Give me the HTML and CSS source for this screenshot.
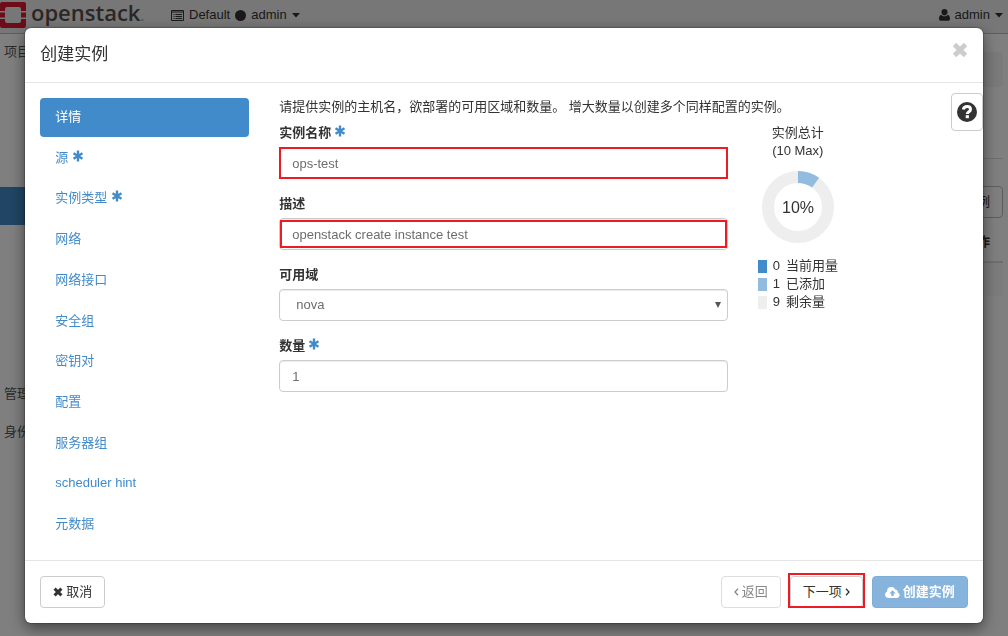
FILE: index.html
```html
<!DOCTYPE html>
<html lang="zh-CN">

<head>
    <meta charset="UTF-8">
    <meta name="viewport" content="width=device-width, initial-scale=1.0">

    <title>创建实例</title>

    <link rel="stylesheet" href="styles.css">
</head>

<body>
    <!-- Shared icons -->
    <svg class="sprite" aria-hidden="true">
        <symbol id="star" viewBox="0 0 12 12">
            <path d="M6 .5v11M1.500 3.300l9 5.400M1.500 8.700l9-5.400" stroke="currentColor" stroke-width="2.400" />
        </symbol>
        <symbol id="times" viewBox="0 0 14 14">
            <path d="M2.200 2.200l9.600 9.600M11.800 2.200l-9.600 9.600" stroke="currentColor" stroke-width="4.200" />
        </symbol>
        <symbol id="caret" viewBox="0 0 8 5">
            <path d="M0 0h8L4 4.500z" fill="currentColor" />
        </symbol>
    </svg>

    <!-- Dashboard behind the dialog -->
    <header class="navbar">
        <a href="#" class="brand">
            <svg class="brand-mark" viewBox="0 0 26 26">
                <path fill="#da1a32" d="M2 0h22a2 2 0 0 1 2 2v7h-5V7a2 2 0 0 0-2-2H7a2 2 0 0 0-2 2v2H0V2a2 2 0 0 1 2-2zM0 10.500h5v5H0zM21 10.500h5v5h-5zM0 17h5v2a2 2 0 0 0 2 2h12a2 2 0 0 0 2-2v-2h5v7a2 2 0 0 1-2 2H2a2 2 0 0 1-2-2z" />
            </svg>
            <span class="brand-name">openstack<small>.</small></span>
        </a>
        <a href="#" class="nav-item">
            <svg width="13" height="11" viewBox="0 0 13 11">
                <path d="M.5.500h12v10H.500zM.500 2h12M2.500 4.500h1M4.500 4.500h6.500M2.500 6.500h1M4.500 6.500h6.500M2.500 8.500h1M4.500 8.500h6.500" fill="none" stroke="currentColor" />
            </svg>
            <span>Default</span>
            <i class="dot"></i>
            <span>admin</span>
            <svg class="caret"><use href="#caret" /></svg>
        </a>
        <a href="#" class="nav-item nav-user">
            <svg width="11" height="12" viewBox="0 0 11 12">
                <path d="M5.500 0a3 3 0 0 1 3 3.200c0 1.900-1.300 3.300-3 3.300s-3-1.400-3-3.300a3 3 0 0 1 3-3.200zM2.300 5.700c1.800 2 4.600 2 6.400 0C10.400 6 11 7.800 11 9.700c0 1.400-.8 2.100-2 2.100H2c-1.200 0-2-.7-2-2.100 0-1.900.600-3.700 2.300-4z" fill="currentColor" />
            </svg>
            <span>admin</span>
            <svg class="caret"><use href="#caret" /></svg>
        </a>
    </header>

    <div class="page">
        <nav class="sidebar">
            <a href="#">项目</a>
            <a href="#" class="current" aria-label="实例"></a>
            <a href="#">管理</a>
            <a href="#">身份管理</a>
        </nav>
        <main class="content">
            <div class="crumbs"></div>
            <hr>
            <div class="toolbar"><button type="button">创建实例</button></div>
            <div class="table-head">动作</div>
            <div class="table-row"></div>
        </main>
    </div>

    <!-- Launch instance dialog -->
    <div class="backdrop">
        <div class="modal" role="dialog" aria-labelledby="modalTitle">
            <div class="modal-header">
                <h1 id="modalTitle">创建实例</h1>
                <button type="button" class="close" aria-label="关闭"><svg><use href="#times" /></svg></button>
            </div>

            <div class="modal-body">
                <nav class="steps">
                    <a href="#" class="active">详情</a>
                    <a href="#">源 <svg class="star"><use href="#star" /></svg></a>
                    <a href="#">实例类型 <svg class="star"><use href="#star" /></svg></a>
                    <a href="#">网络</a>
                    <a href="#">网络接口</a>
                    <a href="#">安全组</a>
                    <a href="#">密钥对</a>
                    <a href="#">配置</a>
                    <a href="#">服务器组</a>
                    <a href="#">scheduler hint</a>
                    <a href="#">元数据</a>
                </nav>

                <div class="step-content">
                    <p>请提供实例的主机名，欲部署的可用区域和数量。 增大数量以创建多个同样配置的实例。</p>

                    <div class="columns">
                        <form class="form">
                            <div class="form-group">
                                <label for="name">实例名称 <svg class="star"><use href="#star" /></svg></label>
                                <div class="field marked"><input type="text" id="name" value="ops-test"></div>
                            </div>
                            <div class="form-group">
                                <label for="description">描述</label>
                                <div class="field marked marked-inner"><input type="text" id="description" value="openstack create instance test"></div>
                            </div>
                            <div class="form-group">
                                <label for="zone">可用域</label>
                                <div class="field">
                                    <select id="zone">
                                        <option>nova</option>
                                    </select>
                                    <svg class="arrow" viewBox="0 0 6 6"><path d="M0 0h6L3 6z" fill="currentColor" /></svg>
                                </div>
                            </div>
                            <div class="form-group">
                                <label for="count">数量 <svg class="star"><use href="#star" /></svg></label>
                                <div class="field"><input type="text" id="count" value="1"></div>
                            </div>
                        </form>

                        <div class="quota">
                            <div>实例总计</div>
                            <div>(10 Max)</div>
                            <svg class="donut" viewBox="0 0 72 72">
                                <circle cx="36" cy="36" r="30" fill="none" stroke="#eee" stroke-width="12" />
                                <circle cx="36" cy="36" r="30" fill="none" stroke="#92bbe0" stroke-width="12" pathLength="100" stroke-dasharray="10 90" transform="rotate(-90 36 36)" />
                                <text x="36" y="42" text-anchor="middle">10%</text>
                            </svg>
                            <ul class="legend">
                                <li><i class="used"></i><b>0</b>当前用量</li>
                                <li><i class="added"></i><b>1</b>已添加</li>
                                <li><i class="left"></i><b>9</b>剩余量</li>
                            </ul>
                        </div>
                    </div>
                </div>

                <button type="button" class="help" aria-label="帮助">
                    <svg width="20" height="20" viewBox="0 0 20 20">
                        <circle cx="10" cy="10" r="10" fill="#333" />
                        <path d="M6.300 7.500C6.800 5.300 8.200 4.500 10.100 4.500c2 0 3.400 1.200 3.400 2.900 0 2.400-3.200 2.300-3.200 4.600" fill="none" stroke="#fff" stroke-width="3" />
                        <path d="M8.700 13.200h3.200v3H8.700z" fill="#fff" />
                    </svg>
                </button>
            </div>

            <div class="modal-footer">
                <button type="button" class="btn cancel"><svg width="10" height="10"><use href="#times" /></svg>取消</button>
                <button type="button" class="btn back" disabled>
                    <svg width="5" height="8" viewBox="0 0 5 8"><path d="M4 .8L1 4l3 3.200" fill="none" stroke="currentColor" stroke-width="1.300" /></svg>返回
                </button>
                <span class="marked marked-next">
                    <button type="button" class="btn next">下一项<svg width="5" height="8" viewBox="0 0 5 8"><path d="M1 .8L4 4 1 7.200" fill="none" stroke="currentColor" stroke-width="1.300" /></svg></button>
                </span>
                <button type="button" class="btn create" disabled>
                    <svg width="15" height="11" viewBox="0 0 15 11">
                        <path fill-rule="evenodd" d="M3.500 11A3.400 3.400 0 0 1 2.100 4.500 4.200 4.200 0 0 1 10.200 2.600a2.500 2.500 0 0 1 2.600 3A2.800 2.800 0 0 1 12 11zM7.500 3.300L4.300 6.500h2V9h2.400V6.500h2z" fill="currentColor" />
                    </svg>创建实例
                </button>
            </div>
        </div>
    </div>
</body>

</html>
```

FILE: styles.css
```css
/* General styles */
* {
    box-sizing: border-box;
}

body {
    margin: 0;
    height: 100vh;
    overflow: hidden;
    background: #fff;
    color: #333;
    font-family: "Liberation Sans", "Noto Sans CJK SC", sans-serif;
    font-size: 13px;
    line-height: 18px;
}

a {
    color: #428bca;
    text-decoration: none;
}

button,
input,
select {
    font: inherit;
    color: inherit;
}

.sprite {
    display: none;
}

/* Top bar */
.navbar {
    display: flex;
    align-items: center;
    height: 34px;
    padding-right: 5px;
    padding-bottom: 3px;
    background: #efefef;
    border-bottom: 1px solid #bbb;
}

.brand {
    display: flex;
    align-items: center;
    gap: 5px;
    width: 171px;
    color: #574e4a;
}

.brand-mark {
    width: 26px;
    height: 26px;
}

.brand-name {
    font-family: "Open Sans", sans-serif;
    font-size: 22px;
    font-weight: 600;
    line-height: 30px;
    padding-bottom: 2px;
}

.brand-name small {
    font-size: 13px;
    color: #999;
}

.nav-item {
    display: flex;
    align-items: center;
    gap: 5px;
    color: #333;
}

.nav-user {
    margin-left: auto;
}

.dot {
    width: 11px;
    height: 11px;
    border-radius: 50%;
    background: #333;
}

.caret {
    width: 8px;
    height: 5px;
}

/* Dashboard */
.page {
    display: flex;
}

.sidebar {
    width: 220px;
    display: flex;
    flex-direction: column;
}

.sidebar a {
    padding: 9px 4px;
    height: 38px;
    color: #555;
}

.sidebar .current {
    margin: 115px 0 151px;
    background: #428bca;
}

.content {
    flex: 1;
    padding: 18px 5px 0 20px;
}

.crumbs {
    height: 35px;
    background: #f5f5f5;
    border-radius: 4px;
}

.content hr {
    margin: 71px 0 27px;
    border: 0;
    border-top: 1px solid #ddd;
}

.toolbar {
    display: flex;
    justify-content: flex-end;
}

.toolbar button {
    height: 32px;
    padding: 0 12px;
    background: #fff;
    border: 1px solid #bbb;
    border-radius: 4px;
}

.table-head {
    height: 45px;
    padding: 15px 13px;
    border-bottom: 2px solid #ddd;
    font-weight: bold;
    text-align: right;
}

.table-row {
    height: 33px;
    background: #f9f9f9;
}

/* Modal */
.backdrop {
    position: fixed;
    inset: 0;
    padding-top: 28px;
    background: rgba(0, 0, 0, 0.5);
}

.modal {
    width: 95%;
    margin: 0 auto;
    background: #fff;
    border-radius: 6px;
    box-shadow: 0 5px 15px rgba(0, 0, 0, 0.5), 0 0 1px 1px rgba(0, 0, 0, 0.2);
}

.modal-header {
    display: flex;
    justify-content: space-between;
    align-items: flex-start;
    padding: 14px 15px;
    border-bottom: 1px solid #e5e5e5;
}

.modal-header h1 {
    margin: 0;
    font-size: 17px;
    font-weight: normal;
    line-height: 26px;
}

.close {
    padding: 0;
    border: 0;
    background: none;
    color: #ccc;
}

.close svg {
    display: block;
    width: 16px;
    height: 16px;
}

.modal-body {
    display: flex;
    gap: 30px;
    position: relative;
    padding: 15px 15px 16px;
}

/* Wizard steps */
.steps {
    display: flex;
    flex-direction: column;
    gap: 2px;
    flex: 0 0 209px;
    height: 446px;
}

.steps a {
    flex: 1;
    display: flex;
    align-items: center;
    gap: 4px;
    padding: 0 15px 1px;
    border-radius: 4px;
}

.steps .active {
    background: #428bca;
    color: #fff;
}

.star {
    width: 12px;
    height: 12px;
    color: #428bca;
    margin-bottom: 4px;
}

.step-content {
    flex: 1;
}

.step-content p {
    margin: 0 0 8px;
}

.columns {
    display: flex;
    gap: 15px;
}

/* Form */
.form {
    flex: 1;
}

.form-group {
    margin-bottom: 16px;
}

.form-group label {
    display: flex;
    align-items: center;
    gap: 3px;
    margin-bottom: 5px;
    font-weight: bold;
}

.field {
    position: relative;
}

.field input,
.field select {
    display: block;
    width: 100%;
    height: 32px;
    padding: 0 12px;
    border: 1px solid #ccc;
    border-radius: 4px;
    background: #fff;
    box-shadow: inset 0 1px 1px rgba(0, 0, 0, 0.08);
    color: #6d6d6d;
}

.field select {
    appearance: none;
    padding: 0 16px;
}

.arrow {
    position: absolute;
    right: 7px;
    top: 13px;
    width: 6px;
    height: 6px;
    color: #555;
}

/* Red highlight frames */
.marked {
    position: relative;
}

.marked::after {
    content: "";
    position: absolute;
    inset: 0;
    border: 2px solid #ed1c24;
    pointer-events: none;
}

.marked-inner::after {
    inset: 2px 1px 2px 1px;
}

.marked-next::after {
    inset: -3px -2px 0;
}

/* Quota chart */
.quota {
    flex: 0 0 110px;
    margin-right: 115px;
    text-align: center;
}

.donut {
    display: block;
    width: 72px;
    height: 72px;
    margin: 11px auto 14px;
}

.donut text {
    font-size: 16px;
    fill: #333;
}

.legend {
    margin: 0;
    padding: 0 0 0 15px;
    list-style: none;
}

.legend li {
    display: flex;
    align-items: center;
    gap: 6px;
    white-space: nowrap;
}

.legend i {
    width: 9px;
    height: 13px;
}

.legend b {
    font-weight: normal;
}

.used {
    background: #428bca;
}

.added {
    background: #92bbe0;
}

.left {
    background: #eee;
}

/* Help button hangs on the right edge of the body */
.help {
    position: absolute;
    top: 10px;
    right: 0;
    width: 32px;
    height: 38px;
    padding: 0;
    border: 1px solid #ccc;
    border-radius: 4px;
    background: #fff;
}

.help svg {
    display: block;
    margin: 0 auto;
}

/* Footer */
.modal-footer {
    display: flex;
    gap: 9px;
    padding: 15px;
    border-top: 1px solid #e5e5e5;
}

.btn {
    display: flex;
    align-items: center;
    justify-content: center;
    gap: 3px;
    height: 32px;
    padding: 0 12px;
    border: 1px solid #ccc;
    border-radius: 4px;
    background: #fff;
}

.cancel {
    margin-right: auto;
}

.back {
    border-color: #ddd;
    color: #888;
}

.create {
    border-color: #7fadd6;
    background: #86b4dd;
    color: #fff;
    font-weight: bold;
}
```
